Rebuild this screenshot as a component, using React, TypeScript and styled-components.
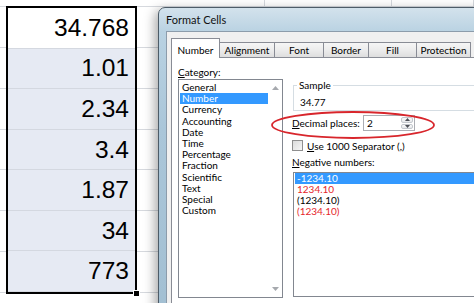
import React from 'react';
import styled, { createGlobalStyle } from 'styled-components';

const Page = createGlobalStyle`
  html, body { margin: 0; padding: 0; background: #fff; }
  * { box-sizing: border-box; }
`;

const values = ['34.768', '1.01', '2.34', '3.4', '1.87', '34', '773'];
const categories = [
  'General', 'Number', 'Currency', 'Accounting', 'Date', 'Time',
  'Percentage', 'Fraction', 'Scientific', 'Text', 'Special', 'Custom',
];
const negatives = [
  { text: '-1234.10', red: false },
  { text: '1234.10', red: true },
  { text: '(1234.10)', red: false },
  { text: '(1234.10)', red: true },
];
const tabs = [
  { label: 'Number', width: 49 },
  { label: 'Alignment', width: 56 },
  { label: 'Font', width: 50 },
  { label: 'Border', width: 46 },
  { label: 'Fill', width: 49 },
  { label: 'Protection', width: 55 },
];

const Screen = styled.div`
  position: relative;
  width: 474px;
  height: 303px;
  overflow: hidden;
  background: #fff;
`;

/* ---------- spreadsheet ---------- */

const Sheet = styled.div`
  display: flex;
  height: 100%;
`;

const Column = styled.div<{ $w: number }>`
  width: ${(p) => p.$w}px;
  flex: ${(p) => (p.$w ? 'none' : '1')};
  display: flex;
  flex-direction: column;
  border-right: 1px solid #d6d9de;
`;

const Stub = styled.div`
  height: 7px;
  border-bottom: 1px solid #d6d9de;
`;

const Cell = styled.div`
  height: 40.86px;
  flex: none;
  border-bottom: 1px solid #d6d9de;
`;

const Selection = styled.div`
  position: relative;
  width: 131px;
  height: 288px;
  margin-top: 6px;
  border: 2px solid #000;
  display: flex;
  flex-direction: column;
`;

const ValueCell = styled.div<{ $active: boolean }>`
  flex: 1;
  display: flex;
  align-items: center;
  justify-content: flex-end;
  padding-right: 6px;
  background: ${(p) => (p.$active ? '#fff' : '#e6eaf3')};
  border-bottom: 1px solid #d4d8e0;
  font-family: 'Liberation Sans', Arial, sans-serif;
  font-size: 24.5px;
  color: #000;
  &:last-child { border-bottom: none; }
`;

const FillHandle = styled.div`
  position: absolute;
  right: -5px;
  bottom: -5px;
  width: 7px;
  height: 7px;
  background: #000;
  border: 1px solid #fff;
`;

/* ---------- dialog ---------- */

const Dialog = styled.div`
  position: absolute;
  left: 158px;
  top: 7px;
  width: 340px;
  height: 320px;
  border: 1px solid #4d5c68;
  border-radius: 7px 7px 0 0;
  background: linear-gradient(to bottom, #d3e2ec 0, #b9d2e2 24px, #aac6d9 120px, #a2bfd2 100%);
  box-shadow: -3px 3px 12px rgba(0, 0, 0, 0.35);
  padding-left: 7px;
  display: flex;
  flex-direction: column;
  font-family: Lato, 'Liberation Sans', sans-serif;
  font-size: 10px;
  color: #000;
`;

const TitleBar = styled.div`
  height: 23px;
  line-height: 23px;
  font-size: 11px;
  color: #111;
`;

const Client = styled.div`
  flex: 1;
  display: flex;
  flex-direction: column;
  background: #f0f0f0;
  border-left: 1px solid #8c9cab;
  border-top: 1px solid #8c9cab;
  padding: 7px 0 0 4px;
`;

const TabStrip = styled.div`
  display: flex;
  align-items: flex-end;
  height: 18px;
  position: relative;
  z-index: 1;
`;

const Tab = styled.div<{ $active?: boolean; $w: number }>`
  width: ${(p) => p.$w}px;
  height: ${(p) => (p.$active ? 20 : 15)}px;
  margin-right: -1px;
  margin-bottom: ${(p) => (p.$active ? -1 : 0)}px;
  padding-top: ${(p) => (p.$active ? 3 : 0)}px;
  line-height: ${(p) => (p.$active ? 16 : 15)}px;
  text-align: center;
  border: 1px solid #898c95;
  border-bottom: none;
  background: ${(p) =>
    p.$active ? '#fff' : 'linear-gradient(to bottom, #f6f6f6, #ececec 50%, #dedede)'};
  position: relative;
  z-index: ${(p) => (p.$active ? 2 : 1)};
`;

const TabPanel = styled.div`
  flex: 1;
  display: flex;
  background: #fff;
  border: 1px solid #898c95;
  border-right: none;
  padding-left: 6px;
`;

const LeftPane = styled.div`
  width: 105px;
  display: flex;
  flex-direction: column;
`;

const Label = styled.div<{ $mt?: number }>`
  line-height: 12px;
  margin-top: ${(p) => p.$mt ?? 0}px;
  white-space: nowrap;
`;

const ListBox = styled.div`
  position: relative;
  width: 105px;
  height: 219px;
  margin-top: 1px;
  border: 1px solid #828790;
  padding: 2px 14px 0 1px;
`;

const ListItem = styled.div<{ $selected?: boolean; $red?: boolean }>`
  line-height: 11.2px;
  height: 11.2px;
  padding-left: 2px;
  white-space: nowrap;
  background: ${(p) => (p.$selected ? '#3399ff' : 'transparent')};
  color: ${(p) => (p.$selected ? '#fff' : p.$red ? '#e5262b' : '#000')};
`;

const ScrollArrow = styled.svg<{ $bottom?: boolean }>`
  position: absolute;
  right: 3px;
  ${(p) => (p.$bottom ? 'bottom: 6px;' : 'top: 6px;')}
  width: 7px;
  height: 4px;
`;

const RightPane = styled.div`
  flex: 1;
  margin-left: 9px;
  display: flex;
  flex-direction: column;
`;

const SampleGroup = styled.fieldset`
  margin: 21px 0 0 1px;
  padding: 0 0 2px 6px;
  border: 1px solid #d5dde3;
  border-right: none;
  min-width: 0;

  legend {
    padding: 0 2px;
    margin-left: -3px;
    line-height: 12px;
  }
`;

const SampleValue = styled.div`
  line-height: 12px;
  margin-top: 5px;
`;

const DecimalRow = styled.div`
  display: flex;
  align-items: center;
  height: 16px;
  margin-top: 4px;
`;

const DecimalLabel = styled.div`
  width: 71px;
  white-space: nowrap;
`;

const Spinner = styled.div`
  width: 52px;
  height: 16px;
  border: 1px solid #abadb3;
  display: flex;
  background: #fff;
`;

const SpinValue = styled.div`
  flex: 1;
  padding-left: 3px;
  line-height: 14px;
`;

const SpinButtons = styled.div`
  width: 14px;
  display: flex;
  flex-direction: column;
  padding: 1px;
  gap: 1px;
`;

const SpinButton = styled.div`
  flex: 1;
  display: flex;
  align-items: center;
  justify-content: center;
  border: 1px solid #c3c7cd;
  border-radius: 2px;
  background: linear-gradient(to bottom, #fafafa, #e6e8eb);
`;

const CheckRow = styled.div`
  display: flex;
  align-items: center;
  height: 11px;
  margin-top: 9px;
`;

const CheckBox = styled.div`
  width: 11px;
  height: 11px;
  border: 1px solid #8f8f8f;
  background: linear-gradient(135deg, #dcdcdc, #f6f6f6);
  margin-right: 4px;
`;

const NegativeList = styled.div`
  height: 125px;
  margin: 4px 0 0 1px;
  border: 1px solid #828790;
  border-right: none;
  padding: 0 0 0 1px;
`;

const Annotation = styled.svg`
  position: absolute;
  left: 269px;
  top: 109px;
  width: 170px;
  height: 32px;
  overflow: visible;
`;

const Arrow = ({ down }: { down?: boolean }) => (
  <svg width="5" height="3" viewBox="0 0 5 3">
    <path d={down ? 'M0 0h5L2.5 3z' : 'M2.5 0L5 3H0z'} fill="#4d5057" />
  </svg>
);

const Key = ({ k, rest }: { k: string; rest: string }) => (
  <>
    <u>{k}</u>
    {rest}
  </>
);

export default function App() {
  return (
    <Screen>
      <Page />
      <Sheet>
        <Column $w={6} style={{ borderRight: 'none' }}>
          <Stub />
          {values.map((_, i) => <Cell key={i} />)}
        </Column>
        <Selection>
          {values.map((v, i) => (
            <ValueCell key={i} $active={i === 0}>{v}</ValueCell>
          ))}
          <FillHandle />
        </Selection>
        <Column $w={128}>
          <Stub />
          {values.map((_, i) => <Cell key={i} />)}
        </Column>
        <Column $w={127}>
          <Stub />
          {values.map((_, i) => <Cell key={i} />)}
        </Column>
        <Column $w={0}>
          <Stub />
          {values.map((_, i) => <Cell key={i} />)}
        </Column>
      </Sheet>

      <Dialog>
        <TitleBar>Format Cells</TitleBar>
        <Client>
          <TabStrip>
            {tabs.map((t, i) => (
              <Tab key={t.label} $w={t.width} $active={i === 0}>{t.label}</Tab>
            ))}
          </TabStrip>
          <TabPanel>
            <LeftPane>
              <Label $mt={8}><Key k="C" rest="ategory:" /></Label>
              <ListBox>
                {categories.map((c) => (
                  <ListItem key={c} $selected={c === 'Number'}>{c}</ListItem>
                ))}
                <ScrollArrow viewBox="0 0 7 4"><path d="M3.5 0L7 4H0z" fill="#a6a9ae" /></ScrollArrow>
                <ScrollArrow $bottom viewBox="0 0 7 4"><path d="M0 0h7L3.5 4z" fill="#a6a9ae" /></ScrollArrow>
              </ListBox>
            </LeftPane>
            <RightPane>
              <SampleGroup>
                <legend>Sample</legend>
                <SampleValue>34.77</SampleValue>
              </SampleGroup>
              <DecimalRow>
                <DecimalLabel><Key k="D" rest="ecimal places:" /></DecimalLabel>
                <Spinner>
                  <SpinValue>2</SpinValue>
                  <SpinButtons>
                    <SpinButton><Arrow /></SpinButton>
                    <SpinButton><Arrow down /></SpinButton>
                  </SpinButtons>
                </Spinner>
              </DecimalRow>
              <CheckRow>
                <CheckBox />
                <span><Key k="U" rest="se 1000 Separator (,)" /></span>
              </CheckRow>
              <Label $mt={5}><Key k="N" rest="egative numbers:" /></Label>
              <NegativeList>
                {negatives.map((n, i) => (
                  <ListItem key={i} $selected={i === 0} $red={n.red} style={{ lineHeight: '11px', height: '11px' }}>
                    {n.text}
                  </ListItem>
                ))}
              </NegativeList>
            </RightPane>
          </TabPanel>
        </Client>
      </Dialog>

      <Annotation viewBox="0 0 170 32">
        <ellipse cx="84" cy="16" rx="81" ry="13" fill="none" stroke="#d8262c" strokeWidth="1.8" />
      </Annotation>
    </Screen>
  );
}
